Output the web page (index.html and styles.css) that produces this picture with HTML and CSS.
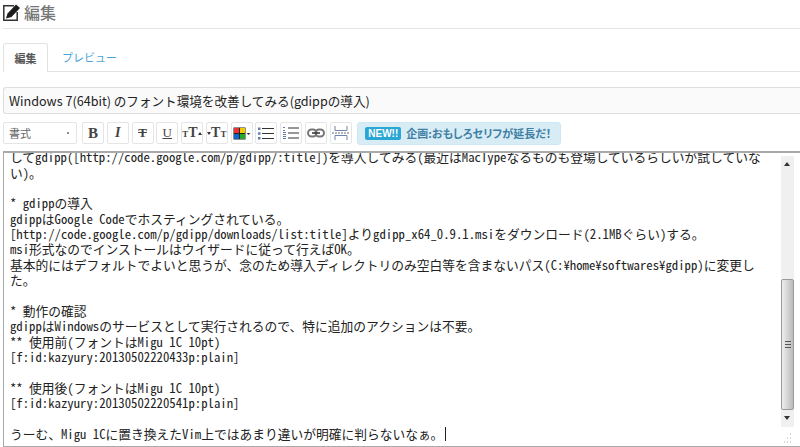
FILE: index.html
```html
<!DOCTYPE html>
<html lang="ja">
<head>
<meta charset="utf-8">
<title>編集</title>
<link rel="stylesheet" href="styles.css">
</head>
<body>
<header class="page-head">
  <svg class="edit-icon" width="18" height="18" viewBox="0 0 18 18">
    <path d="M11 2.8H.8v14.4h13.4V9" fill="none" stroke="#333" stroke-width="1.5"/>
    <path d="M3 15.5l1.5-5L13 1.5l4 3.5-8.5 9z" fill="#1c1c1c"/>
  </svg>
  <h1 class="page-title">編集</h1>
</header>
<nav class="tabs">
  <span class="tab active">編集</span>
  <span class="tab">プレビュー</span>
</nav>
<div class="title-input">Windows 7(64bit) のフォント環境を改善してみる(gdippの導入)</div>
<div class="toolbar">
  <span class="format-select">書式<i class="caret"></i></span>
  <span class="btn bold">B</span>
  <span class="btn italic">I</span>
  <span class="btn strike">T</span>
  <span class="btn under">U</span>
  <span class="btn size"><span class="caps">T</span>T<i class="tri up"></i></span>
  <span class="btn size"><i class="tri down"></i>T<span class="caps">T</span></span>
  <span class="btn">
    <svg width="18" height="13" viewBox="0 0 18 13"><rect x=".5" y=".5" width="12" height="12" fill="#222"/><rect x="1" y="1" width="5" height="5" fill="#e33"/><rect x="7" y="1" width="5" height="5" fill="#ec0"/><rect x="1" y="7" width="5" height="5" fill="#16c"/><rect x="7" y="7" width="5" height="5" fill="#2a2"/><path d="M13.5 6h4l-2 2z" fill="#333"/></svg>
  </span>
  <span class="btn">
    <svg width="16" height="13" viewBox="0 0 16 13"><path d="M4 1.5h12M4 6.5h12M4 11.5h12" stroke="#333" stroke-width="1.2"/><path d="M0 .5h2.5V3H0zM0 5.2h2.5v2.5H0zM0 10h2.5v2.5H0z" fill="#5f7fb0"/></svg>
  </span>
  <span class="btn">
    <svg width="16" height="14" viewBox="0 0 16 14"><path d="M5 2h11M5 7h11M5 12h11" stroke="#333" stroke-width="1.2"/><path d="M0 1h2v1H0zM0 4h2v1H0zM0 6h3v1H0zM0 8h3v1H0zM0 10h3v1H0zM0 12h3v1H0z" fill="#5f7fb0"/></svg>
  </span>
  <span class="btn">
    <svg width="18" height="10" viewBox="0 0 18 10"><rect x="1" y="1.5" width="8.5" height="7" rx="3.5" fill="none" stroke="#777" stroke-width="2"/><rect x="8.5" y="1.5" width="8.5" height="7" rx="3.5" fill="none" stroke="#777" stroke-width="2"/><path d="M5 5h8" stroke="#333" stroke-width="1.5"/></svg>
  </span>
  <span class="btn">
    <svg width="18" height="14" viewBox="0 0 18 14"><path d="M3 0v4.500h12V0M3 14V9.500h12V14" fill="none" stroke="#6f86a8"/><path d="M0 7h18" stroke="#667" stroke-dasharray="2 1"/></svg>
  </span>
  <a class="promo"><b class="new">NEW!!</b><span class="promo-text">企画:おもしろセリフが延長だ！</span></a>
</div>
<div class="editor">
  <div class="editor-text"><div class="clip">してgdipp([http://code.google.com/p/gdipp/:title])を導入してみる(最近はMacTypeなるものも登場しているらしいが試していな
い)。

* gdippの導入
gdippはGoogle Codeでホスティングされている。
[http://code.google.com/p/gdipp/downloads/list:title]よりgdipp_x64_0.9.1.msiをダウンロード(2.1MBぐらい)する。
msi形式なのでインストールはウイザードに従って行えばOK。
基本的にはデフォルトでよいと思うが、念のため導入ディレクトリのみ空白等を含まないパス(C:¥home¥softwares¥gdipp)に変更し
た。

* 動作の確認
gdippはWindowsのサービスとして実行されるので、特に追加のアクションは不要。
** 使用前(フォントはMigu 1C 10pt)
[f:id:kazyury:20130502220433p:plain]

** 使用後(フォントはMigu 1C 10pt)
[f:id:kazyury:20130502220541p:plain]

うーむ、Migu 1Cに置き換えたVim上ではあまり違いが明確に判らないなぁ。<span class="cursor"></span></div></div>
  <div class="scrollbar">
    <span class="arrow up"></span>
    <div class="track"><div class="thumb"><i class="grip"></i></div></div>
    <span class="arrow down"></span>
    <svg class="corner" width="12" height="14" viewBox="0 0 12 14"><path d="M9 2h1v1H9zM6 6h1v1H6zM9 6h1v1H9zM3 10h1v1H3zM6 10h1v1H6zM9 10h1v1H9z" fill="#aaa"/></svg>
  </div>
</div>
</body>
</html>
```
FILE: styles.css
```css
* { box-sizing: border-box; }
html, body { margin: 0; padding: 0; }
body {
  width: 800px; height: 447px; overflow: hidden; background: #fff; color: #333;
  font-family: "Noto Sans CJK JP", "Liberation Sans", sans-serif;
}
.page-head {
  display: flex; align-items: center; gap: 3px; height: 29px; margin-left: 3px;
  padding-bottom: 5px; border-bottom: 1px solid #e5e5e5;
}
.edit-icon { flex: none; }
.page-title { margin: 0; font-size: 16px; font-weight: 500; color: #777; line-height: 24px; }
.tabs {
  display: flex; height: 29px; margin: 14px 0 0 3px; border-bottom: 1px solid #e2e2e2;
}
.tab { padding: 0 14px; font-size: 11px; line-height: 28px; color: #4aa3d8; }
.tab.active {
  height: 29px; width: 45px; padding: 0; text-align: center; font-weight: 700; color: #555; background: #fff;
  border: 1px solid #e2e2e2; border-bottom: 0; border-radius: 3px 3px 0 0;
}
.title-input {
  height: 27px; margin: 15px 0 0 3px; padding: 0 5px; border: 1px solid #ddd; border-right: 0; border-radius: 3px 0 0 3px;
  font-size: 12.6px; line-height: 25px; color: #222; white-space: nowrap; background: #fafafa;
}
.toolbar { display: flex; align-items: center; height: 22px; margin: 8px 0 0 3px; gap: 2.75px; }
.format-select {
  display: flex; align-items: center; justify-content: space-between; width: 74px; height: 22px; padding: 0 7px 0 5px; margin-right: 2.25px;
  border: 1px solid #e5e5e5; border-radius: 2px; font-size: 11px; color: #666;
}
.caret { width: 2px; height: 2px; background: #888; }
.btn {
  display: flex; align-items: center; justify-content: center; width: 22px; height: 22px; flex: none;
  border: 1px solid #e5e5e5; border-radius: 2px; font-family: "Liberation Serif", serif; font-size: 13px; color: #444;
}
.bold { font-weight: 700; font-size: 15px; }
.italic { font-style: italic; font-weight: 700; font-size: 14px; }
.strike { text-decoration: line-through; font-weight: 700; }
.under { text-decoration: underline; }
.size { font-weight: 700; font-size: 14px; align-items: baseline; line-height: 20px; }
.caps { font-size: 9px; }
.tri { width: 0; height: 0; border: 2px solid transparent; align-self: center; }
.tri.up { border-bottom: 3px solid #333; border-top: 0; }
.tri.down { border-top: 3px solid #333; border-bottom: 0; }
.promo {
  display: flex; align-items: center; flex: none; width: 204px; height: 23px; margin-left: 3px; padding: 0 7px; gap: 5px;
  background: #d8ecf6; border: 1px solid #cfe7f4; border-radius: 3px;
  font-size: 11px; font-weight: 700; color: #3f7fa3;
}
.promo-text { font-feature-settings: "palt"; white-space: nowrap; }
.new { padding: 0 3px; background: #2aa6d5; color: #fff; border-radius: 2px; font-size: 10px; line-height: 13px; font-family: "Liberation Sans", sans-serif; }
.editor {
  display: flex; height: 296px; margin: 7px 0 0 3px; border: 1px solid #aaa; border-top: 2px solid #aaa; border-right: 0;
  overflow: hidden;
}
.editor-text { flex: 1; overflow: hidden; padding-left: 6px; min-width: 0; }
.clip {
  margin-top: -3.6px; white-space: pre; font-size: 12.76px; line-height: 15.35px; color: #222;
  font-family: "Noto Sans CJK JP", monospace; font-feature-settings: "hwid";
}
.cursor { display: inline-block; width: 1px; height: 14px; margin-left: 2px; background: #222; vertical-align: -2px; }
.scrollbar { display: flex; flex-direction: column; width: 13px; flex: none; margin-right: 6px; padding-top: 3px; }
.arrow { display: block; flex: none; width: 13px; height: 17px; background: #f0f0f0; position: relative; }
.arrow::after { content: ""; position: absolute; left: 3px; width: 0; height: 0; border: 3px solid transparent; }
.arrow.up::after { top: 6px; border-bottom: 4px solid #333; border-top: 0; }
.arrow.down::after { top: 6px; border-top: 4px solid #333; border-bottom: 0; }
.track { flex: 1; display: flex; flex-direction: column; justify-content: flex-end; background: #f0f0f0; }
.thumb {
  height: 131px; display: flex; align-items: center; justify-content: center;
  background: linear-gradient(90deg, #eee, #bbb); border: 1px solid #999; border-radius: 2px;
}
.grip { display: block; width: 6px; height: 7px; border-top: 1px solid #555; border-bottom: 1px solid #555; background: linear-gradient(#555, #555) center / 100% 1px no-repeat; }
.corner { flex: none; height: 19px; padding-top: 4px; }
```
